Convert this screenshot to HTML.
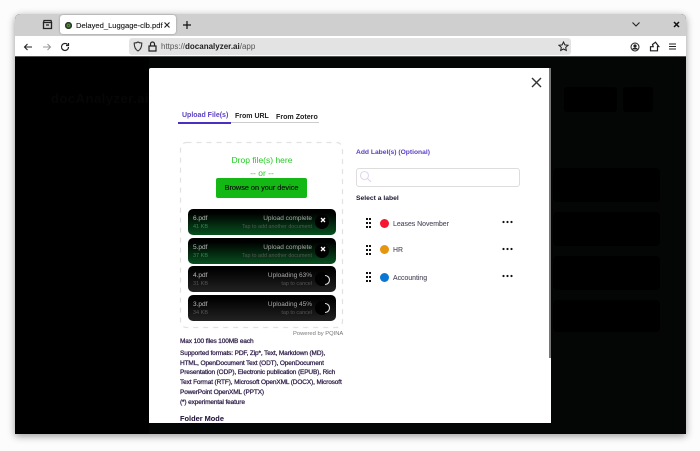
<!DOCTYPE html>
<html><head><meta charset="utf-8">
<style>
html,body{margin:0;padding:0;background:#fcfcfc;}
body{width:700px;height:451px;overflow:hidden;position:relative;font-family:"Liberation Sans",sans-serif;}
.a{position:absolute;white-space:nowrap;}
#root{position:absolute;left:0;top:0;width:700px;height:451px;filter:blur(.35px);}
.win{position:absolute;left:15px;top:14px;width:671px;height:420px;background:#040606;border-radius:5px 5px 0 0;box-shadow:0 2px 8px rgba(0,0,0,.4);overflow:hidden;}
.item{position:absolute;left:188px;width:148px;height:26px;border-radius:5px;color:#ddd;}
.green{background:linear-gradient(#000 15%,#07501f 100%);}
.dark{background:linear-gradient(#000 10%,#222 100%);}
.item .n{position:absolute;left:5px;top:5.500px;font-size:6.500px;color:#bbb;}
.item .s{position:absolute;left:5px;top:15px;font-size:5.500px;color:#555;}
.green .s,.green .t2{color:#2d8a4c;}
.item .t1{position:absolute;right:24px;top:5.500px;font-size:6.500px;color:#aaa;}
.item .t2{position:absolute;right:24px;top:15px;font-size:5.400px;color:#555;}
.item .c{position:absolute;right:7px;top:6px;width:14px;height:14px;border-radius:50%;background:#000;}
.lab{font-size:6.900px;color:#4d4a5c;-webkit-text-stroke:.1px #4d4a5c;}
.dot{position:absolute;width:9px;height:9px;border-radius:50%;}
.txt{font-size:6.500px;color:#2a1a45;letter-spacing:-.13px;-webkit-text-stroke:.25px #2a1a45;}
</style></head><body>
<div id="root">
<div class="win"></div>
<!-- tab bar -->
<div class="a" style="left:15px;top:14px;width:671px;height:22px;background:#cfcfcf;border-radius:5px 5px 0 0;"></div>
<!-- toolbar -->
<div class="a" style="left:15px;top:36px;width:671px;height:21px;background:#fff;"></div>
<div class="a" style="left:15px;top:56px;width:671px;height:1px;background:#555;"></div>
<!-- tab -->
<div class="a" style="left:60px;top:15px;width:116px;height:19px;background:#fff;border-radius:3px;box-shadow:0 0 2px rgba(0,0,0,.3);"></div>
<svg class="a" style="left:42px;top:19px" width="11" height="11" viewBox="0 0 11 11"><path d="M1.500 3.500h8v6h-8zM2 1.500h7l.5 2h-8zM4 6h3" fill="none" stroke="#222" stroke-width="1.300"/></svg>
<div class="a" style="left:65px;top:22px;width:7px;height:7px;border-radius:50%;background:#2c3a2c;box-shadow:inset 0 0 0 1.500px #333,inset 0 0 0 3px #4a8a30;"></div>
<div class="a" style="left:76px;top:19px;width:87px;overflow:hidden;font-size:7.600px;line-height:13px;color:#111;-webkit-text-stroke:.1px #111;">Delayed_Luggage-clb.pdf</div>
<svg class="a" style="left:163px;top:21px" width="8" height="8" viewBox="0 0 8 8"><path d="M1.500 1.500l5 5M6.500 1.500l-5 5" stroke="#222" stroke-width="1.100"/></svg>
<svg class="a" style="left:182px;top:20px" width="10" height="10" viewBox="0 0 10 10"><path d="M5 1v8M1 5h8" stroke="#111" stroke-width="1.200"/></svg>
<svg class="a" style="left:631px;top:21px" width="10" height="7" viewBox="0 0 10 7"><path d="M1.500 1.500L5 5l3.500-3.500" fill="none" stroke="#222" stroke-width="1.100"/></svg>
<svg class="a" style="left:673px;top:21px" width="7" height="7" viewBox="0 0 7 7"><path d="M1 1l5 5M6 1L1 6" stroke="#111" stroke-width="1.500"/></svg>
<!-- nav -->
<svg class="a" style="left:23px;top:42px" width="10" height="10" viewBox="0 0 10 10"><path d="M9 5H1.500M4.500 2L1.500 5l3 3" fill="none" stroke="#222" stroke-width="1.100"/></svg>
<svg class="a" style="left:42px;top:42px" width="10" height="10" viewBox="0 0 10 10"><path d="M1 5h7.500M5.500 2l3 3-3 3" fill="none" stroke="#999" stroke-width="1.100"/></svg>
<svg class="a" style="left:60px;top:42px" width="10" height="10" viewBox="0 0 10 10"><path d="M8.500 5A3.500 3.500 0 1 1 7.500 2.500M8.500 1v2.500H6" fill="none" stroke="#222" stroke-width="1.200"/></svg>
<div class="a" style="left:129px;top:38px;width:442px;height:17px;background:#e3e3e3;border-radius:3px;"></div>
<svg class="a" style="left:133px;top:41px" width="10" height="11" viewBox="0 0 10 11"><path d="M5 1c1 .7 2.500 1 3.800 1 0 4-1 6.500-3.800 8C2.200 8.500 1.200 6 1.200 2 2.500 2 4 1.700 5 1z" fill="none" stroke="#333" stroke-width="1.100"/></svg>
<svg class="a" style="left:148px;top:41px" width="9" height="11" viewBox="0 0 9 11"><path d="M1 5h7v5H1zM2.500 5V3a2 2 0 0 1 4 0v2" fill="none" stroke="#222" stroke-width="1.200"/></svg>
<div class="a" style="left:161px;top:41px;font-size:8px;line-height:11px;color:#555;">https://<b style="color:#222">docanalyzer.ai</b>/app</div>
<svg class="a" style="left:558px;top:41px" width="11" height="11" viewBox="0 0 11 11"><path d="M5.500 1l1.400 2.900 3.100.4-2.300 2.100.6 3.100-2.800-1.500-2.800 1.500.6-3.100L1 4.300l3.100-.4z" fill="none" stroke="#222" stroke-width="1"/></svg>
<svg class="a" style="left:630px;top:42px" width="10" height="10" viewBox="0 0 10 10"><circle cx="5" cy="5" r="4" fill="none" stroke="#222" stroke-width="1"/><circle cx="5" cy="4" r="1.600" fill="#222"/><path d="M2.300 7.500c1-1.700 4.400-1.700 5.400 0" fill="#222" stroke="#222"/></svg>
<svg class="a" style="left:649px;top:41px" width="11" height="11" viewBox="0 0 11 11"><path d="M1.500 9.800h7V5.500h1.300L6.500 1.200 3.500 3.500l.7 2.200H1.500z" fill="none" stroke="#222" stroke-width="1.200"/></svg>
<svg class="a" style="left:668px;top:42px" width="9" height="9" viewBox="0 0 9 9"><path d="M1 2h7M1 4.500h7M1 7h7" stroke="#222" stroke-width="1.100"/></svg>
<!-- page behind -->
<div class="a" style="left:15px;top:57px;width:134px;height:377px;background:#000;"></div>
<div class="a" style="left:51px;top:91px;font-size:13px;font-weight:bold;color:#060606;letter-spacing:.5px;">docAnalyzer.ai</div>
<div class="a" style="left:564px;top:87px;width:53px;height:25px;background:#000;border-radius:3px;"></div>
<div class="a" style="left:623px;top:87px;width:30px;height:25px;background:#000;border-radius:3px;"></div>
<div class="a" style="left:553px;top:168px;width:107px;height:34px;background:#000;border-radius:4px;"></div>
<div class="a" style="left:553px;top:212px;width:107px;height:34px;background:#000;border-radius:4px;"></div>
<div class="a" style="left:553px;top:256px;width:107px;height:34px;background:#000;border-radius:4px;"></div>
<div class="a" style="left:553px;top:300px;width:107px;height:32px;background:#000;border-radius:4px;"></div>
<!-- modal -->
<div class="a" style="left:149px;top:68px;width:402px;height:355px;background:#fff;border-radius:2px 2px 0 0;"></div>
<div class="a" style="left:549px;top:68px;width:2px;height:290px;background:#777;"></div>
<svg class="a" style="left:531px;top:77px" width="11" height="11" viewBox="0 0 11 11"><path d="M1 1l9 9M10 1l-9 9" stroke="#333" stroke-width="1.400"/></svg>
<!-- tabs -->
<div class="a" style="left:182px;top:111px;font-size:7px;font-weight:bold;line-height:10px;color:#5b3fc4;">Upload File(s)</div>
<div class="a" style="left:235px;top:112px;font-size:7px;font-weight:bold;line-height:10px;color:#222;">From URL</div>
<div class="a" style="left:276px;top:112px;font-size:7.100px;font-weight:bold;line-height:10px;color:#222;">From Zotero</div>
<div class="a" style="left:178px;top:122px;width:141px;height:1px;background:#ccc;"></div>
<div class="a" style="left:178px;top:122px;width:53px;height:2px;background:#4b2fc0;"></div>
<!-- dropzone -->
<svg class="a" style="left:179px;top:141px" width="166" height="188" viewBox="0 0 166 188"><rect x="1.500" y="1.500" width="162" height="185" rx="6" fill="none" stroke="#e2e2e2" stroke-width="1.200" stroke-dasharray="5 5"/></svg>
<div class="a" style="left:180px;top:155px;width:164px;text-align:center;font-size:8.500px;line-height:11px;color:#22cc22;">Drop file(s) here</div>
<div class="a" style="left:180px;top:168px;width:164px;text-align:center;font-size:8.500px;line-height:11px;color:#22cc22;">-- or --</div>
<div class="a" style="left:216px;top:178px;width:91px;height:20px;background:#14b814;border-radius:2px;text-align:center;font-size:7.300px;line-height:20px;color:#0a0a0a;-webkit-text-stroke:.12px #0a0a0a;">Browse on your device</div>
<!-- items -->
<div class="item green" style="top:209px"><span class="n">6.pdf</span><span class="s">41 KB</span><span class="t1">Upload complete</span><span class="t2">Tap to add another document</span><span class="c"></span></div>
<div class="item green" style="top:238px"><span class="n">5.pdf</span><span class="s">37 KB</span><span class="t1">Upload complete</span><span class="t2">Tap to add another document</span><span class="c"></span></div>
<div class="item dark" style="top:266px"><span class="n">4.pdf</span><span class="s">31 KB</span><span class="t1">Uploading 63%</span><span class="t2">tap to cancel</span><span class="c"></span></div>
<div class="item dark" style="top:295px"><span class="n">3.pdf</span><span class="s">34 KB</span><span class="t1">Uploading 45%</span><span class="t2">tap to cancel</span><span class="c"></span></div>
<svg class="a" style="left:319px;top:245px" width="8" height="8" viewBox="0 0 8 8"><path d="M2 2l4 4M6 2L2 6" stroke="#fff" stroke-width="1.300"/></svg>
<svg class="a" style="left:319px;top:216px" width="8" height="8" viewBox="0 0 8 8"><path d="M2 2l4 4M6 2L2 6" stroke="#fff" stroke-width="1.300"/></svg>
<svg class="a" style="left:322px;top:274px" width="10" height="12" viewBox="0 0 10 12"><path d="M3 1.500a4.500 4.500 0 0 1 0 9" fill="none" stroke="#ddd" stroke-width="1.100"/></svg>
<svg class="a" style="left:322px;top:302px" width="10" height="12" viewBox="0 0 10 12"><path d="M3 1.500a4.500 4.500 0 0 1 0 9" fill="none" stroke="#ddd" stroke-width="1.100"/></svg>
<div class="a" style="left:293px;top:330px;font-size:5.800px;line-height:9px;color:#777;">Powered by PQINA</div>
<!-- left text -->
<div class="a txt" style="left:180px;top:337px;line-height:10px;">Max 100 files 100MB each</div>
<div class="a txt" style="left:180px;top:349px;line-height:9.700px;">Supported formats: PDF, Zip*, Text, Markdown (MD),<br>HTML, OpenDocument Text (ODT), OpenDocument<br>Presentation (ODP), Electronic publication (EPUB), Rich<br>Text Format (RTF), Microsoft OpenXML (DOCX), Microsoft<br>PowerPoint OpenXML (PPTX)</div>
<div class="a txt" style="left:180px;top:398px;line-height:10px;">(*) experimental feature</div>
<div class="a" style="left:180px;top:413px;font-size:7.400px;font-weight:bold;line-height:11px;color:#1c0f33;">Folder Mode</div>
<!-- right column -->
<div class="a" style="left:356px;top:148px;font-size:6.700px;font-weight:bold;line-height:10px;color:#5b3fc4;">Add Label(s) (Optional)</div>
<div class="a" style="left:356px;top:168px;width:162px;height:17px;border:1px solid #ddd;border-radius:3px;"></div>
<svg class="a" style="left:359px;top:170px" width="13" height="13" viewBox="0 0 13 13"><circle cx="5.500" cy="5.500" r="4" fill="none" stroke="#e2d5f0" stroke-width="1.100"/><path d="M8.500 8.500l3.500 3.500" stroke="#e2d5f0" stroke-width="1.100"/></svg>
<div class="a" style="left:356px;top:193px;font-size:6.750px;font-weight:bold;line-height:11px;color:#1c1530;">Select a label</div>
<svg class="a" style="left:365px;top:217px" width="7" height="12" viewBox="0 0 7 12"><path d="M1 1h2v2H1zM4 1h2v2H4zM1 5h2v2H1zM4 5h2v2H4zM1 9h2v2H1zM4 9h2v2H4z" fill="#111"/></svg>
<svg class="a" style="left:365px;top:244px" width="7" height="12" viewBox="0 0 7 12"><path d="M1 1h2v2H1zM4 1h2v2H4zM1 5h2v2H1zM4 5h2v2H4zM1 9h2v2H1zM4 9h2v2H4z" fill="#111"/></svg>
<svg class="a" style="left:365px;top:271px" width="7" height="12" viewBox="0 0 7 12"><path d="M1 1h2v2H1zM4 1h2v2H4zM1 5h2v2H1zM4 5h2v2H4zM1 9h2v2H1zM4 9h2v2H4z" fill="#111"/></svg>
<div class="dot" style="left:380px;top:219px;background:#f5172e;"></div>
<div class="dot" style="left:380px;top:245px;background:#e5950f;"></div>
<div class="dot" style="left:380px;top:273px;background:#0b77d5;"></div>
<div class="a lab" style="left:393px;top:219px;line-height:11px;">Leases November</div>
<div class="a lab" style="left:393px;top:245px;line-height:11px;">HR</div>
<div class="a lab" style="left:393px;top:273px;line-height:11px;">Accounting</div>
<svg class="a" style="left:502px;top:220px" width="11" height="4" viewBox="0 0 11 4"><circle cx="1.500" cy="2" r="1.100" fill="#111"/><circle cx="5.500" cy="2" r="1.100" fill="#111"/><circle cx="9.500" cy="2" r="1.100" fill="#111"/></svg>
<svg class="a" style="left:502px;top:247px" width="11" height="4" viewBox="0 0 11 4"><circle cx="1.500" cy="2" r="1.100" fill="#111"/><circle cx="5.500" cy="2" r="1.100" fill="#111"/><circle cx="9.500" cy="2" r="1.100" fill="#111"/></svg>
<svg class="a" style="left:502px;top:274px" width="11" height="4" viewBox="0 0 11 4"><circle cx="1.500" cy="2" r="1.100" fill="#111"/><circle cx="5.500" cy="2" r="1.100" fill="#111"/><circle cx="9.500" cy="2" r="1.100" fill="#111"/></svg>
</div>
</body></html>
